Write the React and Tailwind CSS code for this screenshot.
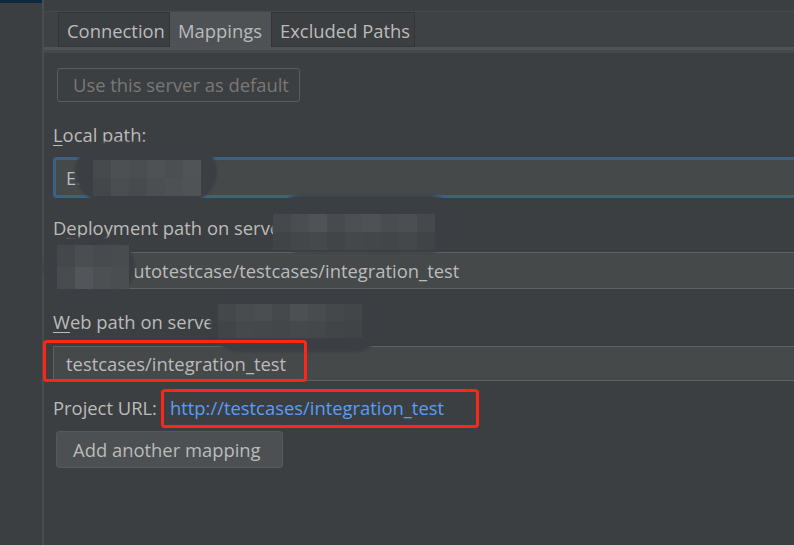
import React from "react";

const F = { fontFamily: '"Open Sans", "Liberation Sans", sans-serif' };

function Mosaic({ rows, cell, className }) {
  return (
    <div className={"absolute flex flex-col " + className}>
      {rows.map((r, i) => (
        <div key={i} className="flex">
          {r.map((c, j) => (
            <div key={j} className={cell + " " + c} />
          ))}
        </div>
      ))}
    </div>
  );
}

export default function App() {
  return (
    <div
      className="relative flex w-[794px] h-[545px] overflow-hidden bg-[#3c3f41] text-[18.4px] text-[#bbbbbb]"
      style={F}
    >
      {/* left tree strip */}
      <div className="w-[42px] shrink-0 flex flex-col">
        <div className="h-[3px] bg-[#0d293e]" />
      </div>
      <div className="w-[2px] shrink-0 bg-[#4a4d50]" />

      {/* main */}
      <div className="flex-1 flex flex-col min-w-0">
        <div className="h-[11px]" />
        <div className="h-px bg-[#46494b]" />
        {/* tabs */}
        <div className="h-[35px] flex bg-[#3f4244] pl-[14px]">
          <div className="w-[112px] h-full flex items-center pt-[4px] pl-[8px] bg-[#3c3f41] border border-[#323436] leading-none">
            Connection
          </div>
          <div className="w-[101px] h-full flex items-center pt-[4px] pl-[8px] bg-[#4e5254] leading-none">
            Mappings
          </div>
          <div className="w-[144px] h-full flex items-center pt-[4px] pl-[8px] bg-[#3c3f41] border border-[#323436] leading-none">
            Excluded Paths
          </div>
        </div>
        <div className="h-[3px] bg-[#505355]" />
        <div className="h-[3px] bg-[#45484a]" />

        {/* content */}
        <div className="flex flex-col pl-[9px]">
          <div className="mt-[15px] ml-[4px] w-[243px] h-[34px] rounded-[3px] border border-[#5a5d5f] flex items-center pl-[15px] text-[#787878]">
            Use this server as default
          </div>

          <div className="mt-[22px] h-[22px] flex items-center">
            <span><span className="underline underline-offset-[3px]">L</span>ocal path:</span>
          </div>
          <div className="mt-[11px] h-[41px] rounded-l-[4px] border-[3px] border-r-0 border-[#3d6185] bg-[#45494a] flex items-center pl-[10px]">
            E:
          </div>

          <div className="mt-[19px] h-[22px] flex items-center">
            <span>D<span className="underline underline-offset-[3px]">e</span>ployment path on server:</span>
          </div>
          <div className="mt-[13px] h-[37px] border-y border-l border-[#5e6162] bg-[#45494a] flex items-center pl-[69px]">
            autotestcase/testcases/integration_test
          </div>

          <div className="mt-[22px] h-[22px] flex items-center">
            <span><span className="underline underline-offset-[3px]">W</span>eb path on server:</span>
          </div>
          <div className="mt-[13px] h-[35px] border-y border-l border-[#5e6162] bg-[#45494a] flex items-center pl-[12px]">
            testcases/integration_test
          </div>

          <div className="mt-[16px] h-[22px] flex items-center gap-[13px]">
            <span>Project URL:</span>
            <span className="text-[#589df6]">http://testcases/integration_test</span>
          </div>

          <div className="mt-[12px] ml-[3px] w-[227px] h-[37px] rounded-[3px] border border-[#55595b] bg-[#4c5052] flex items-center pl-[16px]">
            Add another mapping
          </div>
        </div>
      </div>

      {/* privacy blur blobs */}
      <div className="absolute left-[75px] top-[142px] w-[142px] h-[60px] rounded-[30px] bg-[#3b3f43] blur-[1px]" />
      <Mosaic
        className="left-[93px] top-[160px]"
        cell="w-[18px] h-[18px]"
        rows={[
          ["bg-[#464a4d]", "bg-[#4c5053]", "bg-[#4a4e51]", "bg-[#4e5255]", "bg-[#4b4f52]", "bg-[#505457]"],
          ["bg-[#434749]", "bg-[#4a4e50]", "bg-[#474b4e]", "bg-[#4b4f52]", "bg-[#4d5154]", "bg-[#4f5356]"],
        ]}
      />

      <div className="absolute left-[272px] top-[195px] w-[186px] h-[58px] rounded-[29px] bg-[#3b3f43] blur-[1px]" />
      <Mosaic
        className="left-[273px] top-[214px]"
        cell="w-[18px] h-[18px]"
        rows={[
          ["bg-[#45494c]", "bg-[#4a4e51]", "bg-[#4f5356]", "bg-[#474b4e]", "bg-[#4c5053]", "bg-[#4e5255]", "bg-[#494d50]", "bg-[#4b4f52]", "bg-[#45494c]"],
          ["bg-[#404447]", "bg-[#43474a]", "bg-[#45494c]", "bg-[#414548]", "bg-[#44484b]", "bg-[#43474a]", "bg-[#424649]", "bg-[#44484b]", "bg-[#404447]"],
        ]}
      />

      <div className="absolute left-[43px] top-[237px] w-[92px] h-[61px] rounded-[30px] bg-[#3b3f43] blur-[1px]" />
      <Mosaic
        className="left-[57px] top-[245px]"
        cell="w-[18px] h-[22px]"
        rows={[
          ["bg-[#44484b]", "bg-[#4a4e51]", "bg-[#474b4e]", "bg-[#484c4f]"],
          ["bg-[#484c4f]", "bg-[#52565a]", "bg-[#4c5053]", "bg-[#4a4e51]"],
        ]}
      />

      <div className="absolute left-[210px] top-[293px] w-[173px] h-[59px] rounded-[29px] bg-[#3b3f43] blur-[1px]" />
      <Mosaic
        className="left-[218px] top-[304px]"
        cell="w-[18px] h-[17px]"
        rows={[
          ["bg-[#44484b]", "bg-[#484c4f]", "bg-[#4a4e51]", "bg-[#45494c]", "bg-[#4c5053]", "bg-[#484c4f]", "bg-[#44484b]", "bg-[#424649]"],
          ["bg-[#414548]", "bg-[#45494c]", "bg-[#44484b]", "bg-[#43474a]", "bg-[#46494c]", "bg-[#44484b]", "bg-[#414548]", "bg-[#404447]"],
        ]}
      />

      {/* red annotation boxes */}
      <div className="absolute left-[43px] top-[340px] w-[264px] h-[42px] rounded-[4px] border-[3px] border-[#ff2618]" />
      <div className="absolute left-[161px] top-[389px] w-[318px] h-[39px] rounded-[4px] border-[3px] border-[#ff2618]" />
    </div>
  );
}
